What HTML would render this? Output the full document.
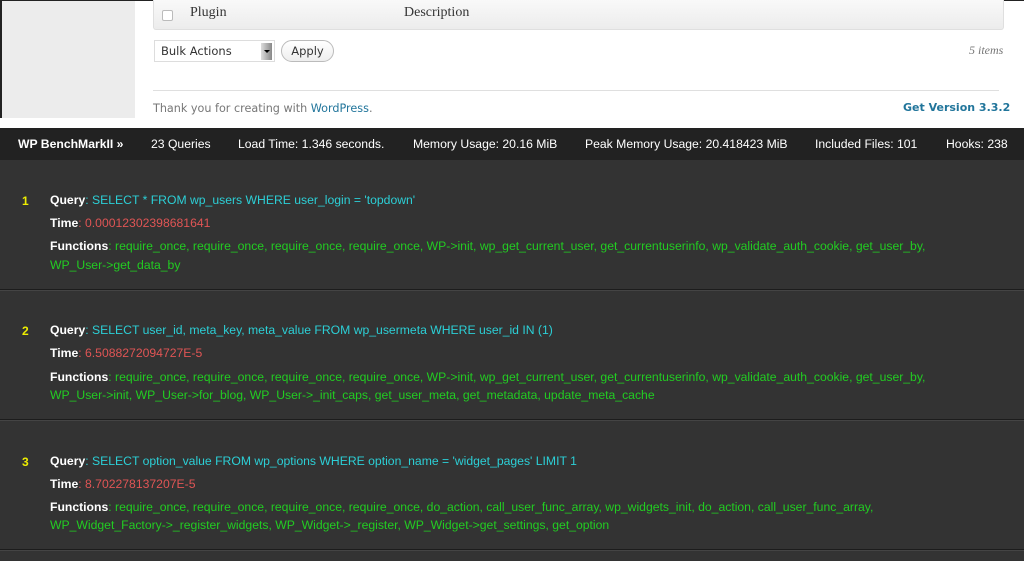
<!DOCTYPE html>
<html><head><style>
*{margin:0;padding:0;box-sizing:border-box}
body{width:1024px;height:561px;overflow:hidden;background:#333;font-family:"Liberation Sans",sans-serif;position:relative}
.a{position:absolute}
.s{font-family:"Liberation Serif",serif}
.q{font-size:12.2px;color:#fff;font-weight:bold;position:absolute;left:50px;white-space:nowrap}
.q span{font-weight:normal}
.c{color:#2ccfd6}.r{color:#e05555}.g{color:#22cc22}
.n{position:absolute;left:22px;color:#eeee00;font-size:12px;font-weight:bold}
.sep{position:absolute;left:0;width:1024px;height:2px;border-top:1px solid #1c1c1c;background:#444}
.bar span{position:absolute;top:137px;font-size:12.2px;color:#fff}
</style></head><body>
<div class="a" style="left:0;top:0;width:1024px;height:128px;background:#fff"></div>
<div class="a" style="left:0;top:0;width:135px;height:118px;background:#ececec;border-left:2px solid #222"></div>
<div class="a" style="left:0;top:0;width:1024px;height:1px;background:#222"></div>
<div class="a" style="left:153px;top:0;width:851px;height:30px;background:linear-gradient(#f9f9f9,#ececec);border:1px solid #dfdfdf;border-top:none;border-radius:0 0 3px 3px"></div>
<div class="a" style="left:162px;top:10px;width:11px;height:11px;border:1px solid #bbb;background:#fff;border-radius:2px"></div>
<div class="a s" style="left:190px;top:5px;font-size:14px;color:#333">Plugin</div>
<div class="a s" style="left:404px;top:5px;font-size:14px;color:#333">Description</div>
<div class="a" style="left:154px;top:40px;width:121px;height:22px;border:1px solid #ddd;background:#fff;color:#333;padding:3px 6px;font-family:'DejaVu Sans',sans-serif;font-size:11.5px">Bulk Actions</div>
<div class="a" style="left:261px;top:43px;width:11px;height:17px;background:linear-gradient(90deg,#ddd,#888);"><div style="margin:7px 3px;width:0;height:0;border-left:3px solid transparent;border-right:3px solid transparent;border-top:3px solid #000"></div></div>
<div class="a" style="left:281px;top:40px;width:53px;height:22px;border:1px solid #bbb;border-radius:11px;background:linear-gradient(#fff,#eee);font-family:'DejaVu Sans',sans-serif;font-size:11.5px;color:#333;text-align:center;line-height:20px">Apply</div>
<div class="a s" style="left:969px;top:43px;font-size:12px;color:#777;font-style:italic">5 items</div>
<div class="a" style="left:153px;top:90px;width:846px;height:1px;background:#dfdfdf"></div>
<div class="a" style="left:153px;top:102px;font-family:'DejaVu Sans',sans-serif;font-size:11.2px;color:#777">Thank you for creating with <span style="color:#21759b">WordPress</span>.</div>
<div class="a" style="left:903px;top:101px;font-family:'DejaVu Sans',sans-serif;font-size:11px;font-weight:bold;color:#21759b">Get Version 3.3.2</div>
<div class="a bar" style="left:0;top:128px;width:1024px;height:32px;background:#222"></div>
<div class="bar">
<span style="left:18px;font-weight:bold">WP BenchMarkII »</span>
<span style="left:151px">23 Queries</span>
<span style="left:238px">Load Time: 1.346 seconds.</span>
<span style="left:413px">Memory Usage: 20.16 MiB</span>
<span style="left:585px">Peak Memory Usage: 20.418423 MiB</span>
<span style="left:815px">Included Files: 101</span>
<span style="left:946px">Hooks: 238</span>
</div>

<div class="n" style="top:194px">1</div>
<div class="q" style="top:193px">Query<span class="c">: SELECT * FROM wp_users WHERE user_login = 'topdown'</span></div>
<div class="q" style="top:216px">Time<span class="r">: 0.00012302398681641</span></div>
<div class="q" style="top:239px">Functions<span class="g">: require_once, require_once, require_once, require_once, WP-&gt;init, wp_get_current_user, get_currentuserinfo, wp_validate_auth_cookie, get_user_by,</span></div>
<div class="q g" style="top:258px;font-weight:normal">WP_User-&gt;get_data_by</div>
<div class="sep" style="top:289px"></div>

<div class="n" style="top:324px">2</div>
<div class="q" style="top:323px">Query<span class="c">: SELECT user_id, meta_key, meta_value FROM wp_usermeta WHERE user_id IN (1)</span></div>
<div class="q" style="top:346px">Time<span class="r">: 6.5088272094727E-5</span></div>
<div class="q" style="top:370px">Functions<span class="g">: require_once, require_once, require_once, require_once, WP-&gt;init, wp_get_current_user, get_currentuserinfo, wp_validate_auth_cookie, get_user_by,</span></div>
<div class="q g" style="top:388px;font-weight:normal">WP_User-&gt;init, WP_User-&gt;for_blog, WP_User-&gt;_init_caps, get_user_meta, get_metadata, update_meta_cache</div>
<div class="sep" style="top:419px"></div>

<div class="n" style="top:455px">3</div>
<div class="q" style="top:454px">Query<span class="c">: SELECT option_value FROM wp_options WHERE option_name = 'widget_pages' LIMIT 1</span></div>
<div class="q" style="top:477px">Time<span class="r">: 8.702278137207E-5</span></div>
<div class="q" style="top:500px">Functions<span class="g">: require_once, require_once, require_once, require_once, do_action, call_user_func_array, wp_widgets_init, do_action, call_user_func_array,</span></div>
<div class="q g" style="top:518px;font-weight:normal">WP_Widget_Factory-&gt;_register_widgets, WP_Widget-&gt;_register, WP_Widget-&gt;get_settings, get_option</div>
<div class="sep" style="top:549px"></div>
</body></html>
